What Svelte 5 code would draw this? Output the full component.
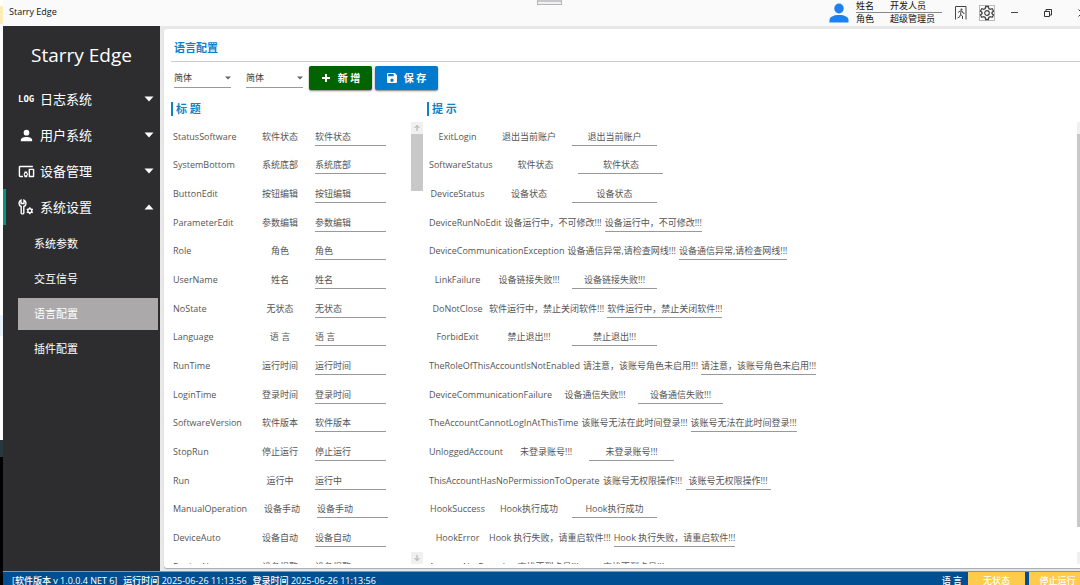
<script>
  const groups = [
    { label: '日志系统', icon: 'log', open: false },
    { label: '用户系统', icon: 'user', open: false },
    { label: '设备管理', icon: 'device', open: false },
    { label: '系统设置', icon: 'tools', open: true },
  ];
  const subItems = ['系统参数', '交互信号', '语言配置', '插件配置'];
  let current = $state('语言配置');

  let titles = $state([
    { key: 'StatusSoftware', text: '软件状态' },
    { key: 'SystemBottom', text: '系统底部' },
    { key: 'ButtonEdit', text: '按钮编辑' },
    { key: 'ParameterEdit', text: '参数编辑' },
    { key: 'Role', text: '角色' },
    { key: 'UserName', text: '姓名' },
    { key: 'NoState', text: '无状态' },
    { key: 'Language', text: '语 言' },
    { key: 'RunTime', text: '运行时间' },
    { key: 'LoginTime', text: '登录时间' },
    { key: 'SoftwareVersion', text: '软件版本' },
    { key: 'StopRun', text: '停止运行' },
    { key: 'Run', text: '运行中' },
    { key: 'ManualOperation', text: '设备手动' },
    { key: 'DeviceAuto', text: '设备自动' },
    { key: 'DeviceAlarm', text: '设备报警' },
  ]);

  let tips = $state([
    { key: 'ExitLogin', text: '退出当前账户' },
    { key: 'SoftwareStatus', text: '软件状态' },
    { key: 'DeviceStatus', text: '设备状态' },
    { key: 'DeviceRunNoEdit', text: '设备运行中，不可修改!!!' },
    { key: 'DeviceCommunicationException', text: '设备通信异常,请检查网线!!!' },
    { key: 'LinkFailure', text: '设备链接失败!!!' },
    { key: 'DoNotClose', text: '软件运行中，禁止关闭软件!!!' },
    { key: 'ForbidExit', text: '禁止退出!!!' },
    { key: 'TheRoleOfThisAccountIsNotEnabled', text: '请注意，该账号角色未启用!!!' },
    { key: 'DeviceCommunicationFailure', text: '设备通信失败!!!' },
    { key: 'TheAccountCannotLogInAtThisTime', text: '该账号无法在此时间登录!!!' },
    { key: 'UnloggedAccount', text: '未登录账号!!!' },
    { key: 'ThisAccountHasNoPermissionToOperate', text: '该账号无权限操作!!!' },
    { key: 'HookSuccess', text: 'Hook执行成功' },
    { key: 'HookError', text: 'Hook 执行失败，请重启软件!!!' },
    { key: 'AccountNotFound', text: '查找不到卡号!!!' },
  ]);
</script>

{#snippet entries(list, prefix)}
  <ul class="entries {prefix}">
    {#each list as item}
      <li>
        <label for="{prefix}-{item.key}">{item.key}</label>
        <span class="value">{item.text}</span>
        <input id="{prefix}-{item.key}" type="text" value={item.text} />
      </li>
    {/each}
  </ul>
{/snippet}

<div class="screen">
  <div class="backdrop" aria-hidden="true"><i class="warm"></i><i class="pale"></i><i class="teal"></i><i class="dark"></i></div>
  <div class="window">
    <header class="titlebar">
      <span class="app-name">Starry Edge</span>
      <span class="grip"></span>
      <div class="account">
        <svg class="avatar" viewBox="0 0 20 20" width="20" height="20" fill="#1c82f1"><ellipse cx="10" cy="5.5" rx="4.7" ry="5" /><path d="M.5 19.500v-2.500c0-3 4-5 9.500-5s9.500 2 9.500 5v2.500z" /></svg>
        <dl>
          <div><dt>姓名</dt><dd>开发人员</dd></div>
          <div><dt>角色</dt><dd>超级管理员</dd></div>
        </dl>
      </div>
      <div class="controls">
        <button class="exit" aria-label="退出">
          <svg viewBox="0 0 12 14" width="12" height="14" fill="none" stroke="#444"><path d="M.5 13.500V.500h10.500v13" /><circle cx="6.500" cy="3.500" r="1" fill="#444" stroke="none" /><path d="M3 6.500l2-1.500h2l1 2 1.500.500M6 5.500l-.500 3 2 1.500v3M5.500 8.500l-1 2.500-2 1" /></svg>
        </button>
        <button class="gear" aria-label="设置">
          <svg viewBox="0 0 16 16" width="16" height="16" fill="none" stroke="#444"><rect x=".5" y=".5" width="15" height="15" stroke-dasharray="1 1" stroke="#777" /><path d="M6.700 1.500h2.600l.5 2 1.400.800 2-.600 1.300 2.300-1.500 1.400v1.200l1.500 1.400-1.300 2.300-2-.600-1.400.800-.5 2H6.700l-.5-2-1.400-.800-2 .600-1.300-2.300L3 8.600V7.400L1.500 6l1.300-2.300 2 .600 1.400-.800z" stroke-width="1.300" /><circle cx="8" cy="8" r="2.300" stroke-width="1.200" /></svg>
        </button>
        <button class="min" aria-label="最小化"><svg viewBox="0 0 8 8" width="8" height="8" stroke="#444"><path d="M0 3.500h7" /></svg></button>
        <button class="restore" aria-label="还原"><svg viewBox="0 0 8 8" width="8" height="8" fill="none" stroke="#333"><path d="M.5 2.500h5v5h-5zM2 2V.500h5.500V6H6" /></svg></button>
        <button class="close" aria-label="关闭"><svg viewBox="0 0 8 8" width="8" height="8" stroke="#333"><path d="M.500.500l7 7m0-7l-7 7" /></svg></button>
      </div>
    </header>

    <div class="body">
      <nav>
        <h1>Starry Edge</h1>
        {#each groups as group}
          <button class="group" class:open={group.open} aria-expanded={group.open}>
            <span class="icon">
              {#if group.icon === 'log'}
                <b>LOG</b>
              {:else if group.icon === 'user'}
                <svg viewBox="0 0 24 24" width="17" height="17" fill="#fff"><path d="M12 4a4 4 0 0 1 0 8 4 4 0 0 1 0-8m0 10c4.420 0 8 1.790 8 4v2H4v-2c0-2.210 3.580-4 8-4z" /></svg>
              {:else if group.icon === 'device'}
                <svg viewBox="0 0 24 24" width="17" height="17" fill="#fff"><path d="M3 6h18V4H3c-1.100 0-2 .9-2 2v12c0 1.100.9 2 2 2h4v-2H3V6zm10 6H9v1.780c-.61.55-1 1.330-1 2.220s.39 1.670 1 2.220V20h4v-1.780c.61-.55 1-1.340 1-2.220s-.39-1.670-1-2.220V12zm-2 5.500c-.83 0-1.500-.67-1.500-1.500s.67-1.500 1.500-1.500 1.500.67 1.500 1.500-.67 1.500-1.500 1.500zM22 8h-6c-.5 0-1 .5-1 1v10c0 .5.5 1 1 1h6c.5 0 1-.5 1-1V9c0-.5-.5-1-1-1zm-1 10h-4v-8h4v8z" /></svg>
              {:else}
                <svg viewBox="0 0 16 16" width="16" height="16" fill="none" stroke="#fff" stroke-width="1.400"><path d="M3 1.200C1.500 2 1 3.200 1 4.500 1 6 2 7 3.200 7.500V14c0 1.200 2.600 1.200 2.600 0V7.500C7 7 8 6 8 4.500 8 3.200 7.500 2 6 1.200V4.500H3z" /><circle cx="11.800" cy="11.800" r="2" /><path d="M11.800 8.300v1.200m0 4.600v1.200m-3-5.200l1 .6m4 2.300l1 .6m-6 0l1-.6m4-2.300l1-.6" /></svg>
              {/if}
            </span>
            <span>{group.label}</span>
            <svg class="chevron" viewBox="0 0 10 6" width="10" height="6" fill="#fff"><path d={group.open ? 'M.500 5.500h9L5 .500z' : 'M.500.500h9L5 5.500z'} /></svg>
          </button>
        {/each}
        <div class="submenu">
          {#each subItems as name}
            <button class:active={current === name} onclick={() => (current = name)}>{name}</button>
          {/each}
        </div>
      </nav>

      <main>
        <section class="card">
          <h2>语言配置</h2>
          <div class="toolbar">
            {#each ['源语言', '目标语言'] as name}
              <div class="pick">
                <select aria-label={name}><option>简体</option></select>
                <svg viewBox="0 0 6 4" width="6" height="4" fill="#666"><path d="M0 .500h6L3 3.500z" /></svg>
              </div>
            {/each}
            <button class="add"><svg viewBox="0 0 10 10" width="10" height="10" stroke="#fff" stroke-width="2"><path d="M1 5h8M5 1v8" /></svg>新 增</button>
            <button class="save"><svg viewBox="3 3 18 18" width="10" height="10" fill="#fff"><path d="M15 9H5V5h10m-3 14a3 3 0 0 1-3-3 3 3 0 0 1 3-3 3 3 0 0 1 3 3 3 3 0 0 1-3 3m5-16H5a2 2 0 0 0-2 2v14a2 2 0 0 0 2 2h14a2 2 0 0 0 2-2V7l-4-4z" /></svg>保 存</button>
          </div>
          <div class="panes">
            <section class="pane first">
              <h3>标 题</h3>
              <div class="scroller">
                {@render entries(titles, 'title')}
                <div class="scrollbar" aria-hidden="true">
                  <span class="arrow"><svg viewBox="0 0 8 8" width="8" height="8" fill="none" stroke="#aaa"><path d="M4 7V1.500M1.500 4L4 1.500 6.500 4" /></svg></span>
                  <span class="thumb short"></span>
                  <span class="arrow end"><svg viewBox="0 0 8 8" width="8" height="8" fill="none" stroke="#aaa"><path d="M4 1v5.500M1.500 4L4 6.500 6.500 4" /></svg></span>
                </div>
              </div>
            </section>
            <section class="pane second">
              <h3>提 示</h3>
              <div class="scroller">
                {@render entries(tips, 'tip')}
                <div class="scrollbar edge" aria-hidden="true"><span class="arrow"></span><span class="thumb long"></span><span class="arrow end"></span></div>
              </div>
            </section>
          </div>
        </section>
      </main>
    </div>

    <footer>
      <span>[软件版本 v 1.0.0.4 NET 6]</span>
      <span>运行时间 2025-06-26 11:13:56</span>
      <span>登录时间 2025-06-26 11:13:56</span>
      <span class="lang">语 言</span>
      <span class="state idle">无状态</span>
      <span class="state stop">停止运行</span>
    </footer>
  </div>
</div>

<style>
  :global(body) { overflow: hidden; }
  .screen, .screen * { box-sizing: border-box; }
  .screen { display: flex; height: 100vh; overflow: hidden; font-family: "Open Sans", "Noto Sans CJK SC", sans-serif; font-size: 9px; line-height: 14px; color: #555; }
  h1, h2, h3, ul, dl, dd { margin: 0; padding: 0; }
  button, input, select { font: inherit; color: inherit; background: none; border: 0; padding: 0; margin: 0; border-radius: 0; outline: 0; }
  svg { display: block; flex: none; }

  .backdrop { flex: none; width: 3px; display: flex; flex-direction: column; background: #fff; padding-top: 6px; }
  .backdrop .warm { height: 18px; background: #ffedb5; }
  .backdrop .pale { flex: 1; background: linear-gradient(#fff 0 70%, #e8f2fb 70% 75%, #fff 75%); }
  .backdrop .teal { height: 17px; background: #26383d; }
  .backdrop .dark { height: 128px; background: #000; }

  .window { flex: 1; min-width: 0; display: flex; flex-direction: column; background: #e8e8e8; }
  .titlebar { flex: none; display: flex; align-items: center; height: 26px; padding-left: 6px; background: #fafafa; color: #111; position: relative; }
  .app-name { line-height: 22px; align-self: flex-start; margin-top: 1px; }
  .grip { position: absolute; left: 50%; top: 0; width: 25px; height: 5px; margin-left: -5px; border: 1px solid #b5b5b8; border-top: 0; background: linear-gradient(#c8c8ca 0 2px, #f0f0f4 2px); }
  .account { margin-left: auto; display: flex; gap: 7px; align-items: center; }
  dl { width: 86px; align-self: flex-start; line-height: 12px; }
  dl div { display: flex; }
  dl div:first-child { border-bottom: 1px solid #888; height: 12px; line-height: 9px; }
  dt { width: 34px; }
  .controls { flex: none; display: flex; align-items: center; height: 24px; margin-right: -6px; padding-left: 13px; }
  .exit { margin-right: 12px; }
  .gear { margin-right: 16px; }
  .min { margin-right: 25px; }
  .restore { margin-right: 26px; }

  .body { flex: 1; min-height: 0; display: flex; }
  nav { flex: none; width: 157px; background: #2d2d30; color: #fff; }
  h1 { padding: 14px 0 11px; font-weight: 400; font-size: 19px; line-height: 30px; text-align: center; }
  .group { display: flex; align-items: center; width: 100%; height: 36px; padding: 0 6px 0 12px; font-size: 13px; border-left: 3px solid transparent; }
  .group.open { border-color: #009688; }
  .icon { width: 22px; display: flex; }
  .icon b { font: 700 9px/12px "DejaVu Sans Mono", monospace; }
  .chevron { margin-left: auto; }
  .submenu { display: grid; gap: 3px; padding: 3px 2px 0 15px; }
  .submenu button { height: 32px; padding-left: 16px; text-align: left; font-size: 11px; }
  .submenu .active { background: #aba9a9; }

  main { flex: 1; min-width: 0; display: flex; padding: 3px 0 3px 4px; }
  .card { flex: 1; min-width: 0; display: flex; flex-direction: column; background: #fff; border-radius: 3px 0 0 3px; box-shadow: 0 1px 1px #aaa; padding: 0 0 4px 7px; }
  h2 { flex: none; height: 33px; padding: 11px 0 0 3px; border-bottom: 1px solid #ccc; font-size: 11px; line-height: 16px; color: #0f82c5; }
  .toolbar { flex: none; display: flex; align-items: center; height: 32px; padding-left: 3px; color: #333; }
  .pick { width: 57px; height: 19px; margin-right: 15px; display: flex; align-items: center; border-bottom: 1px solid #999; }
  .pick + .pick { margin-right: 6px; }
  .pick select { flex: 1; min-width: 0; appearance: none; }
  .toolbar button { display: flex; align-items: center; justify-content: center; gap: 7px; width: 63px; height: 24px; margin-right: 3px; border-radius: 2px; color: #fff; font-size: 10px; font-weight: 700; box-shadow: 0 1px 2px rgba(0, 0, 0, .5); }
  .toolbar .add { background: #006400; }
  .toolbar .save { background: #007acc; }

  .panes { flex: 1; min-height: 0; display: flex; gap: 4px; }
  .pane { display: flex; flex-direction: column; min-height: 0; }
  .first { flex: none; width: 252px; }
  .second { flex: 1; min-width: 0; }
  h3 { flex: none; margin: 8px 0 6px; padding-left: 3px; border-left: 2px solid #0f82c5; font-size: 11px; line-height: 14px; color: #0f82c5; }
  .scroller { flex: 1; min-height: 0; display: flex; justify-content: space-between; overflow: hidden; }
  .entries { list-style: none; padding-left: 2px; }
  .entries li { display: flex; align-items: center; gap: 3px; height: 29px; white-space: nowrap; }
  .entries li:nth-child(3n + 2) { height: 28px; }
  .entries .value { text-align: center; }
  .entries input { height: 18px; border-bottom: 1px solid #999; }
  .title label { min-width: 72px; }
  .title .value { min-width: 64px; }
  .title input { width: 71px; }
  .tip label { min-width: 57px; text-align: center; }
  .tip .value { min-width: 80px; }
  .tip input { field-sizing: content; min-width: 85px; text-align: center; }
  .scrollbar { flex: none; width: 12px; display: flex; flex-direction: column; }
  .edge { width: 3px; }
  .arrow { flex: none; display: flex; align-items: center; justify-content: center; height: 12px; background: #f0f0f0; }
  .arrow.end { margin-top: auto; }
  .thumb { background: #c8c8c8; }
  .short { height: 13%; }
  .long { height: 89%; }

  footer { flex: none; display: flex; height: 14px; padding-left: 9px; gap: 6px; border-top: 1px solid #6b9bc4; background: #004f93; color: #fff; font-weight: 500; line-height: 17px; white-space: nowrap; overflow: hidden; }
  .lang { margin-left: auto; }
  .state { height: 18px; background: #ffcb4c; text-align: center; }
  .idle { width: 57px; }
  .stop { width: 57px; margin: 0 -6px 0 -2px; }
</style>
